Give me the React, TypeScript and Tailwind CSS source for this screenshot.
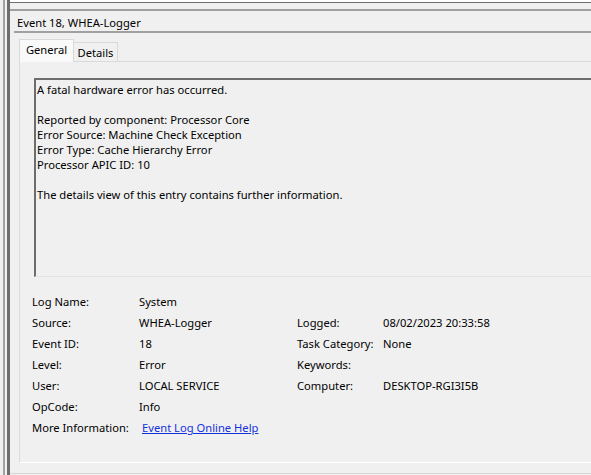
import React from "react";

const font = { fontFamily: '"Noto Sans", "Open Sans", Arial, sans-serif' };

function Field({ label, value, children }: { label: string; value?: string; children?: React.ReactNode }) {
  return (
    <>
      <div className="h-[21px] leading-[21px]">{label}</div>
      <div className="h-[21px] leading-[21px]">{children ?? value}</div>
    </>
  );
}

export default function App() {
  return (
    <div
      className="w-[591px] h-[475px] overflow-hidden bg-[#f0f0f0] text-[11.2px] text-black pl-[3px] flex"
      style={font}
    >
      <div className="border-l-2 border-[#a3a3a3] pl-[2px] flex-1 flex">
        <div className="border-l-[3px] border-[#6d6d6d] flex-1 flex flex-col min-w-0">
          {/* clipped list row above */}
          <div className="h-[3px] overflow-hidden border-b border-[#6d6d6d] bg-white relative">
            <div className="flex whitespace-nowrap -mt-[13px] leading-[15px]">
              <span className="ml-[24px] text-[#1a3d8f]">Information</span>
              <span className="ml-[40px]">08/02/2023 20:33:57</span>
              <span className="ml-[60px]">Kernel-General</span>
              <span className="ml-[110px]">16</span>
              <span className="ml-[20px]">None</span>
            </div>
          </div>
          <div className="h-[6px]" />
          <div className="border-t-2 border-[#a0a0a0] flex-1 flex flex-col">
            <div className="ml-[4px] h-[22px] border-b-2 border-[#a0a0a0] pl-[3px] leading-[21px] pt-[1px]">
              Event 18, WHEA-Logger
            </div>
            {/* tabs */}
            <div className="flex items-end h-[28px] pl-[9px] relative z-10">
              <div className="h-[23px] w-[55px] text-center bg-[#f9f9f9] border border-b-0 border-[#d9d9d9] leading-[20px] -mb-px">
                General
              </div>
              <div className="h-[19px] w-[44px] text-center border border-b-0 border-l-0 border-[#d9d9d9] leading-[19px]">
                Details
              </div>
            </div>
            <div className="ml-[9px] -mr-[8px] h-[402px] border border-[#dadada] border-b-white bg-[#f0f0f0] pt-[16px] pl-[12px] flex flex-col">
              <div className="ml-[2px] h-[199px] border-t-2 border-l-2 border-[#6d6d6d] border-b border-r border-b-[#e3e3e3] border-r-[#e3e3e3] pl-[1px] pt-[2px] leading-[15px]">
                <p>A fatal hardware error has occurred.</p>
                <p className="mt-[15px]">Reported by component: Processor Core</p>
                <p>Error Source: Machine Check Exception</p>
                <p>Error Type: Cache Hierarchy Error</p>
                <p>Processor APIC ID: 10</p>
                <p className="mt-[15px]">The details view of this entry contains further information.</p>
              </div>
              <div className="mt-[14px] flex">
                <div className="grid grid-cols-[107px_158px] content-start">
                  <Field label="Log Name:" value="System" />
                  <Field label="Source:" value="WHEA-Logger" />
                  <Field label="Event ID:" value="18" />
                  <Field label="Level:" value="Error" />
                  <Field label="User:" value="LOCAL SERVICE" />
                  <Field label="OpCode:" value="Info" />
                  <Field label="More Information:">
                    <span className="ml-[3px] text-[#1530dd] underline">Event Log Online Help</span>
                  </Field>
                </div>
                <div className="grid grid-cols-[86px_160px] content-start mt-[21px]">
                  <Field label="Logged:" value="08/02/2023 20:33:58" />
                  <Field label="Task Category:" value="None" />
                  <Field label="Keywords:" value="" />
                  <Field label="Computer:" value="DESKTOP-RGI3I5B" />
                </div>
              </div>
            </div>
            <div className="mt-[10px] border-t border-[#d6d6d6]" />
          </div>
        </div>
      </div>
    </div>
  );
}
